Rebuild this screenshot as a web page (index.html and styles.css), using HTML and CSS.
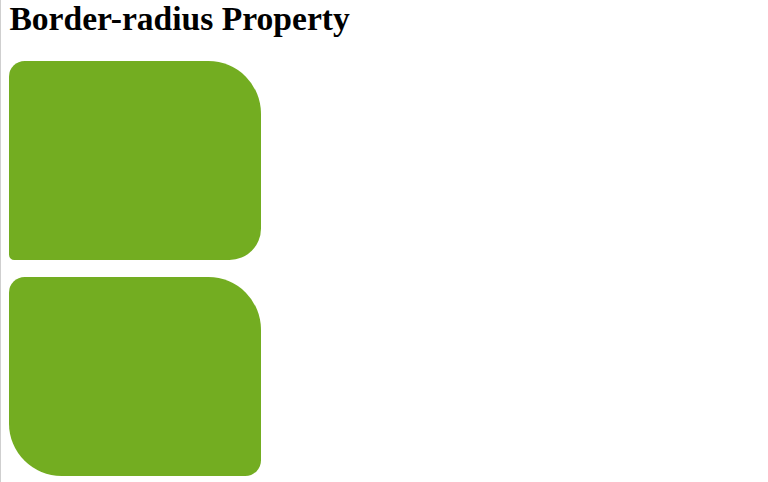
FILE: index.html
```html
<!DOCTYPE html>
<html>
<head>
<meta charset="utf-8">
<link rel="stylesheet" href="styles.css">
</head>
<body>
<h1 class="title">Border-radius Property</h1>
<p class="box box-one"></p>
<p class="box box-two"></p>
</body>
</html>
```
FILE: styles.css
```css
html {
  border-left: 1px solid #cfcfcf;
  background: #fff;
}
body {
  zoom: 1.05;
  margin: 0 8px;
  font-family: "Liberation Serif", "Times New Roman", serif;
  color: #000;
}
.title {
  font-size: 2em;
  font-weight: bold;
  margin: 0 0 0.67em;
}
.box {
  background: #73AD21;
  padding: 20px;
  width: 200px;
  height: 150px;
  margin: 16px 0;
}
.box-one {
  border-radius: 15px 50px 30px 5px;
}
.box-two {
  border-radius: 15px 50px;
}
```
